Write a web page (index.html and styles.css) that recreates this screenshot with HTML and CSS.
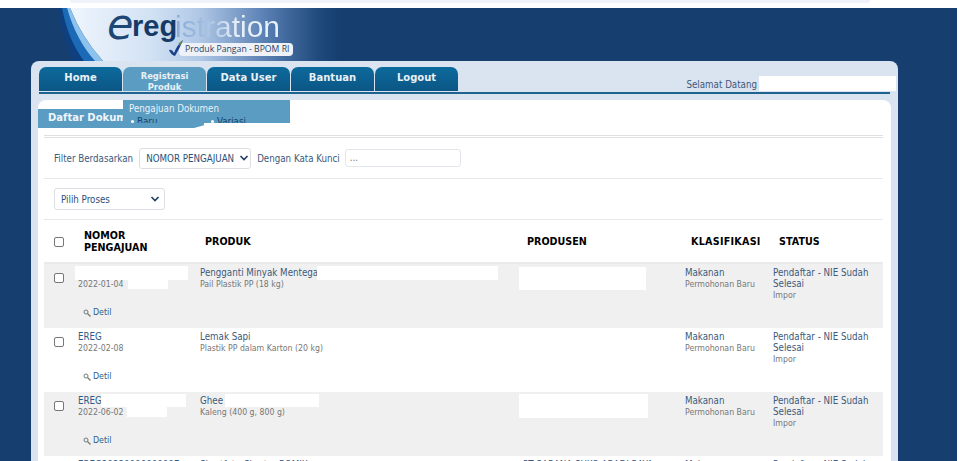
FILE: index.html
```html
<!DOCTYPE html>
<html lang="id">
<head>
<meta charset="utf-8">
<title>e-Registration</title>
<link rel="stylesheet" href="styles.css">
</head>
<body>
<div class="topbar"><div class="toppill"></div></div>
<div class="page">
  <header class="banner">
    <svg class="swoosh" width="282" height="53" viewBox="0 0 282 53">
      <defs>
        <linearGradient id="bg" x1="0" y1="0" x2="1" y2="0">
          <stop offset="0" stop-color="#eef5fc"/>
          <stop offset="0.3" stop-color="#d2e2f4"/>
          <stop offset="0.48" stop-color="#b0c8e6"/>
          <stop offset="0.72" stop-color="#5a80b4"/>
          <stop offset="0.92" stop-color="#20497c"/>
          <stop offset="1" stop-color="#163f70"/>
        </linearGradient>
      </defs>
      <path d="M12 0H282V53H45Q24 30 12 0Z" fill="url(#bg)"/>
      <path d="M0 0H4Q10 32 26 53H15Q4 30 0 0Z" fill="#0f3f7f"/>
      <path d="M4 0H9Q18 32 37 53H26Q10 32 4 0Z" fill="#1a6ab8"/>
      <path d="M9 0H12Q24 30 45 53H37Q18 32 9 0Z" fill="#8cc3ee"/>
    </svg>
    <div class="logo">
      <span class="logo-e">e</span><span class="logo-reg">reg</span><span class="logo-rest">istration</span>
    </div>
    <div class="pill">Produk Pangan - BPOM RI</div>
    <svg class="check" width="16" height="18" viewBox="0 0 16 18"><path d="M1 11Q4 10 6 14Q9 6 15 1Q12 9 7 17Q3 16 1 11Z" fill="#1c3f8c"/><path d="M10.5 4.5Q12.5 2.5 15 1Q13.5 4 12 7Z" fill="#5d8a4a"/></svg>
  </header>

  <main class="panel">
    <nav class="nav">
      <a class="tab">Home</a>
      <a class="tab active">Registrasi Produk</a>
      <a class="tab">Data User</a>
      <a class="tab">Bantuan</a>
      <a class="tab">Logout</a>
      <div class="welcome"><span>Selamat Datang</span><span class="welcome-box"></span></div>
    </nav>

    <section class="content">
      <div class="menu">
        <div class="menu-title">Pengajuan Dokumen</div>
        <div class="menu-items"><span class="bullet">Baru</span><span class="bullet">Variasi</span></div>
      </div>
      <h1 class="title">Daftar Dokumen</h1>
      <div class="rule"></div>

      <div class="filter">
        <label>Filter Berdasarkan</label>
        <div class="select s1">NOMOR PENGAJUAN<svg class="chev" width="10" height="6" viewBox="0 0 10 6"><path d="M1.5 1L5 4.5L8.5 1" fill="none" stroke="#1f3f66" stroke-width="1.6"/></svg></div>
        <label>Dengan Kata Kunci</label>
        <div class="input">...</div>
      </div>

      <div class="process">
        <div class="select s2">Pilih Proses<svg class="chev" width="10" height="6" viewBox="0 0 10 6"><path d="M1.5 1L5 4.5L8.5 1" fill="none" stroke="#1f3f66" stroke-width="1.6"/></svg></div>
      </div>

      <div class="row head">
        <div class="c0"><span class="box"></span></div>
        <div class="c1">NOMOR PENGAJUAN</div>
        <div class="c2">PRODUK</div>
        <div class="c3">PRODUSEN</div>
        <div class="c4">KLASIFIKASI</div>
        <div class="c5">STATUS</div>
      </div>

      <div class="row item odd">
        <div class="c0"><span class="box"></span></div>
        <div class="c1">
          <div class="main"></div>
          <div class="sub">2022-01-04</div>
          <a class="detil"><svg class="lens" width="8" height="8" viewBox="0 0 8 8"><circle cx="3" cy="3" r="2" fill="none" stroke="#777" stroke-width="1"/><path d="M4.5 4.5L7.5 7.5" stroke="#777" stroke-width="1.3"/></svg>Detil</a>
        </div>
        <div class="c2">
          <div class="main">Pengganti Minyak Mentega</div>
          <div class="sub">Pail Plastik PP (18 kg)</div>
        </div>
        <div class="c3"></div>
        <div class="c4"><div class="main">Makanan</div><div class="sub">Permohonan Baru</div></div>
        <div class="c5"><div class="main">Pendaftar - NIE Sudah Selesai</div><div class="sub">Impor</div></div>
        <span class="redact r1a"></span><span class="redact r1b"></span><span class="redact r1c"></span><span class="redact r1d"></span>
      </div>

      <div class="row item">
        <div class="c0"><span class="box"></span></div>
        <div class="c1">
          <div class="main">EREG</div>
          <div class="sub">2022-02-08</div>
          <a class="detil"><svg class="lens" width="8" height="8" viewBox="0 0 8 8"><circle cx="3" cy="3" r="2" fill="none" stroke="#777" stroke-width="1"/><path d="M4.5 4.5L7.5 7.5" stroke="#777" stroke-width="1.3"/></svg>Detil</a>
        </div>
        <div class="c2">
          <div class="main">Lemak Sapi</div>
          <div class="sub">Plastik PP dalam Karton (20 kg)</div>
        </div>
        <div class="c3"></div>
        <div class="c4"><div class="main">Makanan</div><div class="sub">Permohonan Baru</div></div>
        <div class="c5"><div class="main">Pendaftar - NIE Sudah Selesai</div><div class="sub">Impor</div></div>
      </div>

      <div class="row item odd">
        <div class="c0"><span class="box"></span></div>
        <div class="c1">
          <div class="main">EREG</div>
          <div class="sub">2022-06-02</div>
          <a class="detil"><svg class="lens" width="8" height="8" viewBox="0 0 8 8"><circle cx="3" cy="3" r="2" fill="none" stroke="#777" stroke-width="1"/><path d="M4.5 4.5L7.5 7.5" stroke="#777" stroke-width="1.3"/></svg>Detil</a>
        </div>
        <div class="c2">
          <div class="main">Ghee</div>
          <div class="sub">Kaleng (400 g, 800 g)</div>
        </div>
        <div class="c3"></div>
        <div class="c4"><div class="main">Makanan</div><div class="sub">Permohonan Baru</div></div>
        <div class="c5"><div class="main">Pendaftar - NIE Sudah Selesai</div><div class="sub">Impor</div></div>
        <span class="redact r3a"></span><span class="redact r3b"></span><span class="redact r3c"></span><span class="redact r3d"></span>
      </div>

      <div class="row item">
        <div class="c0"><span class="box"></span></div>
        <div class="c1"><div class="main">EREG20220000000007</div></div>
        <div class="c2"><div class="main">Shortfat - Shorter BOMIX</div></div>
        <div class="c3 inset"><div class="main">PT SARANA SUKO ABADI RAYA</div></div>
        <div class="c4"><div class="main">Makanan</div></div>
        <div class="c5"><div class="main">Pendaftar - NIE Sudah Selesai</div></div>
      </div>
    </section>
  </main>
</div>
</body>
</html>
```

FILE: styles.css
```css
* { box-sizing: border-box; }
html, body { margin: 0; height: 461px; overflow: hidden; background: #fff; }
body { font-family: "DejaVu Sans Condensed", "DejaVu Sans", Verdana, sans-serif; font-size: 9.7px; color: #3b5a7c; }

.topbar { height: 8px; background: #fff; }
.toppill { width: 800px; height: 3px; margin-left: 70px; background: #f0f3f9; border-radius: 0 0 8px 8px; }

.page { width: 957px; height: 453px; background: #163f70; padding-left: 31px; overflow: hidden; }

.banner { position: relative; height: 53px; }
.swoosh { position: absolute; left: 27px; top: 0; }
.logo { position: absolute; left: 76px; top: 0; white-space: nowrap; line-height: 1; }
.logo-e { position: absolute; left: 0; top: -9px; font: italic 400 43px "DejaVu Sans", sans-serif; color: #1d4775; }
.logo-reg { position: absolute; left: 25px; top: 2px; font: 700 29px "Liberation Sans", sans-serif; color: #163a66; }
.logo-rest { position: absolute; left: 68px; top: 2px; font: 400 30px "Liberation Sans", sans-serif; color: transparent; background: linear-gradient(90deg, #8aacd6, #9dbbe0 25%, #e8f0f8 60%); -webkit-background-clip: text; background-clip: text; }
.check { position: absolute; left: 137px; top: 31px; }
.pill { position: absolute; left: 148px; top: 35px; height: 13px; padding: 0 4px 0 6px; background: #eef2f8; border-radius: 4px; font: 8.7px/13px "Open Sans", sans-serif; color: #2a3f5c; white-space: nowrap; }

.panel { width: 867px; height: 420px; background: #dae3f0; border-radius: 8px 8px 0 0; padding: 6px 7px 0 7px; }

.nav { display: flex; gap: 1px; height: 27px; margin: 0 1px; border-bottom: 2px solid #1f6490; position: relative; width: 851px; }
.tab { width: 83px; height: 24px; border-radius: 7px 7px 0 0; background: linear-gradient(#0d6a9c, #0b5685); color: #e9f1f7; font-family: "DejaVu Sans", sans-serif; font-weight: 700; font-size: 10px; line-height: 22px; text-align: center; }
.tab.active { background: #5b9cc2; font-size: 8.4px; line-height: 11px; padding: 4px 8px 0; overflow: hidden; }
.welcome { margin-left: auto; display: flex; align-items: flex-end; gap: 2px; height: 24px; color: #3e5878; margin-right: -6px; }
.welcome span:first-child { padding-bottom: 1px; }
.welcome-box { width: 137px; height: 15px; background: #fff; display: block; }

.content { position: relative; width: 853px; height: 400px; margin-top: 6px; background: #fff; border-radius: 8px 8px 0 0; padding-top: 9px; overflow: hidden; }
.title { width: 166px; height: 19px; margin: 0; padding-left: 10px; background: #5b9cc2; font-family: "DejaVu Sans", sans-serif; font-size: 10px; line-height: 18px; color: #f0f5fa; font-weight: 700; clip-path: polygon(0 0, 100% 0, 100% 85%, 94% 100%, 0 100%); white-space: nowrap; overflow: hidden; }
.menu { position: absolute; left: 85px; top: 0; width: 167px; height: 23px; background: #5b9cc2; color: #eaf2f8; padding: 3px 6px 0; overflow: hidden; z-index: 1; line-height: 11px; }
.menu-items { display: flex; margin-top: 2px; padding-left: 8px; color: #14466f; }
.menu-items .bullet { flex: none; width: 80px; }
.bullet { position: relative; }
.bullet::before { content: ""; position: absolute; left: -6px; top: 4px; width: 3px; height: 3px; border-radius: 50%; background: #fff; }

.rule { height: 3px; margin: 7px 8px 0 6px; border-top: 1px solid #e0e0e0; border-bottom: 1px solid #e0e0e0; }

.filter { display: flex; align-items: center; height: 41px; margin: 0 8px 0 6px; padding-left: 10px; border-bottom: 1px solid #e8e8e8; }
.filter label { white-space: nowrap; }
.select { display: flex; align-items: center; justify-content: space-between; background: #fff; border: 1px solid #dcdfe4; border-radius: 3px; color: #2b5078; white-space: nowrap; }
.s1 { width: 112px; height: 21px; margin: 0 6px; padding: 0 1px 0 6px; }
.s2 { width: 111px; height: 22px; padding: 0 4px 0 6px; }
.chev { flex: none; }
.input { width: 116px; height: 18px; margin-left: 5px; padding-left: 4px; border: 1px solid #e3e6ea; border-radius: 3px; line-height: 15px; color: #777; }

.process { height: 41px; margin: 0 8px 0 6px; padding: 9px 0 0 10px; border-bottom: 1px solid #e8e8e8; }

.row { position: relative; display: grid; grid-template-columns: 34px 122px 319px 166px 88px 110px; margin: 0 8px 0 6px; }
.head { height: 44px; padding-top: 1px; align-items: center; font-family: "DejaVu Sans", sans-serif; font-weight: 700; color: #000; font-size: 9.6px; line-height: 12px; border-bottom: 2px solid #eaeaea; }
.head > div { padding-left: 6px; }
.head .c0 { padding-left: 10px; display: flex; }
.head .c1 { padding-right: 40px; }
.head .c2 { padding-left: 5px; }
.head .c3 { padding-left: 8px; }
.head .c4 { letter-spacing: 0.25px; }
.box { display: block; width: 10px; height: 10px; border: 1px solid #767676; border-radius: 2px; background: #fff; }

.item { height: 64px; padding-top: 3px; line-height: 11px; }
.item .c0 { padding: 6px 0 0 10px; }
.odd { background: #f0f0f0; }
.main { min-height: 11px; }
.sub { color: #777; font-size: 8.7px; line-height: 11px; margin-top: 1px; }
.c1 .main, .c1 .detil { color: #2f5d88; }
.detil { display: flex; align-items: center; gap: 2px; margin: 17px 0 0 5px; font-size: 8.8px; }
.lens { flex: none; }
.inset { padding-left: 4px; }

.redact { position: absolute; background: #fff; }
.r1a { left: 31px; top: 2px; width: 113px; height: 14px; }
.r1b { left: 84px; top: 16px; width: 40px; height: 9px; }
.r1c { left: 273px; top: 2px; width: 181px; height: 14px; }
.r1d { left: 475px; top: 3px; width: 127px; height: 23px; }
.r3a { left: 57px; top: 2px; width: 85px; height: 13px; }
.r3b { left: 83px; top: 15px; width: 40px; height: 10px; }
.r3c { left: 181px; top: 2px; width: 94px; height: 13px; }
.r3d { left: 475px; top: 2px; width: 129px; height: 24px; }
```
